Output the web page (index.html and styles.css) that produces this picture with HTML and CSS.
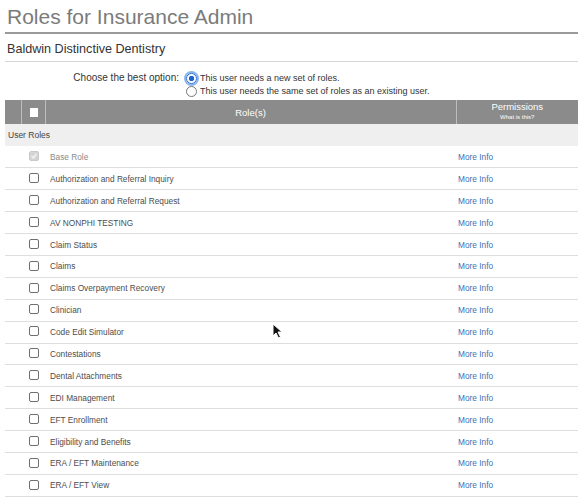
FILE: index.html
```html
<!DOCTYPE html>
<html lang="en">

<head>
    <meta charset="UTF-8">
    <meta name="viewport" content="width=device-width, initial-scale=1.0">
    <title>Roles for Insurance Admin</title>

    <link rel="stylesheet" href="styles.css">
</head>

<body>
    <div class="container">
        <h1>Roles for Insurance Admin</h1>
        <h2>Baldwin Distinctive Dentistry</h2>

        <div class="options">
            <div class="optLabel">Choose the best option:</div>
            <div class="optList">
                <label><span class="radio on"></span>This user needs a new set of roles.</label>
                <label><span class="radio"></span>This user needs the same set of roles as an existing user.</label>
            </div>
        </div>

        <table class="roles">
            <thead>
                <tr>
                    <th class="blank"></th>
                    <th class="chk"><span class="headBox"></span></th>
                    <th class="name">Role(s)</th>
                    <th class="perm">Permissions<small>What is this?</small></th>
                </tr>
            </thead>
            <tbody id="list">
                <tr class="group">
                    <td colspan="4">User Roles</td>
                </tr>
            </tbody>
        </table>

        <!-- mouse pointer from the capture -->
        <svg class="cursor" width="11" height="16" viewBox="0 0 11 16">
            <path d="M1 1 L1 13 L4 10 L6.5 15 L8.5 14 L6 9 L10 9 Z" fill="#111" stroke="#fff" stroke-width="1"/>
        </svg>
    </div>

    <script src="script.js"></script>
</body>

</html>
```

FILE: script.js
```js
let listRoles = document.getElementById("list");

let roles = [
    "Base Role",
    "Authorization and Referral Inquiry",
    "Authorization and Referral Request",
    "AV NONPHI TESTING",
    "Claim Status",
    "Claims",
    "Claims Overpayment Recovery",
    "Clinician",
    "Code Edit Simulator",
    "Contestations",
    "Dental Attachments",
    "EDI Management",
    "EFT Enrollment",
    "Eligibility and Benefits",
    "ERA / EFT Maintenance",
    "ERA / EFT View",
    ""
];

let tick = '<svg width="8" height="8" viewBox="0 0 8 8"><path d="M1.5 4 L3.3 6 L6.5 1.8" fill="none" stroke="#f4f4f4" stroke-width="1.4"/></svg>';

for (let i = 0; i < roles.length; i++) {
    let box = i == 0 ? '<span class="box base">' + tick + '</span>' : '<span class="box"></span>';
    let link = roles[i] ? '<a href="#">More Info</a>' : '';
    listRoles.innerHTML += '<tr class="' + (i == 0 ? 'role disabled' : 'role') + '">\
        <td class="blank"></td>\
        <td class="chk">' + box + '</td>\
        <td class="name">' + roles[i] + '</td>\
        <td class="perm">' + link + '</td></tr>';
}
```

FILE: styles.css
```css
body {
    margin: 0;
    font-family: "Liberation Sans", Arial, sans-serif;
    background-color: white;
    color: #444;
}

.container {
    margin-left: 5px;
    width: 573px;
    position: relative;
}

h1 {
    margin: 0;
    padding: 4px 0 3px 2px;
    font-size: 21px;
    line-height: 25px;
    font-weight: normal;
    color: #7b7b7b;
    border-bottom: 2px solid #9a9a9a;
}

h2 {
    margin: 0;
    padding: 8px 0 4px 2px;
    font-size: 12.6px;
    line-height: 15px;
    font-weight: normal;
    color: #333;
    border-bottom: 1px solid #d6d6d6;
}

.options {
    display: flex;
    padding-top: 10px;
    height: 38px;
    box-sizing: border-box;
    font-size: 9px;
    color: #333;
}

.optLabel {
    width: 181px;
    text-align: right;
    padding-right: 7px;
    font-size: 10px;
    line-height: 12px;
    box-sizing: border-box;
}

.optList label {
    display: flex;
    align-items: center;
    height: 12px;
    margin-bottom: 1px;
}

.radio {
    display: inline-block;
    width: 9px;
    height: 9px;
    border: 1px solid #777;
    border-radius: 50%;
    background-color: white;
    margin-right: 3px;
    box-sizing: content-box;
}

.radio.on {
    border-color: #2b6fd0;
    background: radial-gradient(circle, #1c64d4 0 2.5px, white 3px);
    box-shadow: 0 0 0 2px #8ab4ec;
}

.roles {
    width: 100%;
    border-collapse: collapse;
    font-size: 8.3px;
}

.roles th {
    background-color: #8b8b8b;
    color: white;
    font-weight: normal;
    height: 24px;
    padding: 0;
    font-size: 9.5px;
    border-left: 1px solid #bdbdbd;
    box-sizing: border-box;
}

.roles th:first-child {
    border-left: 0;
}

.roles th.perm {
    width: 122px;
    vertical-align: top;
    padding-top: 1px;
    line-height: 11px;
}

.roles small {
    display: block;
    font-size: 6px;
    line-height: 8px;
    margin-top: 1px;
}

.blank {
    width: 16px;
}

.chk {
    width: 24px;
    text-align: center;
}

.headBox {
    display: inline-block;
    width: 8px;
    height: 9px;
    background-color: white;
    vertical-align: middle;
    margin-left: 1px;
}

.group td {
    background-color: #efefef;
    height: 22px;
    padding: 0 0 0 3px;
    font-size: 8.5px;
    color: #444;
}

.role td {
    height: 21.9px;
    padding: 0;
    border-bottom: 1px solid #dedede;
    box-sizing: border-box;
}

.role .name {
    padding-left: 5px;
    color: #4d4d4d;
}

.role .perm {
    padding-left: 2px;
}

.role .chk {
    padding-left: 8px;
    text-align: left;
}

.disabled .name {
    color: #8a8a8a;
}

.box {
    display: inline-block;
    width: 8px;
    height: 8px;
    border: 1px solid #6f6f6f;
    border-radius: 2px;
    background-color: white;
    vertical-align: middle;
    margin-top: -3px;
}

.box svg {
    display: block;
}

.box.base {
    border-color: #c9c9c9;
    background-color: #d4d4d4;
}

a {
    color: #3a72b4;
    text-decoration: none;
    font-size: 8.3px;
}

.cursor {
    position: absolute;
    left: 267px;
    top: 323px;
}
```
